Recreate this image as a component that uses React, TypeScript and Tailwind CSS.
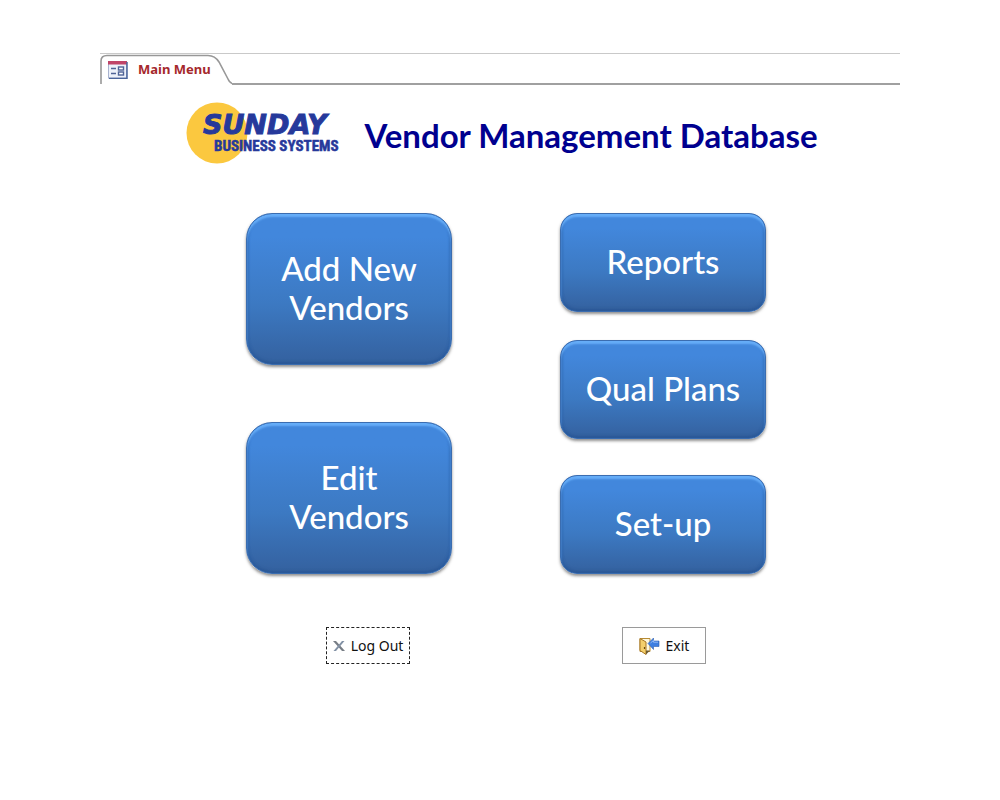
import type { ReactNode } from 'react';

const tileBase =
  "flex w-[206px] items-center justify-center border border-[#3b6db0] bg-linear-to-b from-[#4287dc] from-15% via-[#3c79c2] via-60% to-[#34619f] px-6 pb-0.5 text-center font-['Lato',sans-serif] text-[33px] leading-[39px] font-medium text-white shadow-[0_2px_3px_rgba(70,70,70,0.6),inset_0_3px_2px_#66adf8,inset_2px_0_2px_rgba(40,95,170,0.35),inset_-2px_0_2px_rgba(40,95,170,0.35),inset_0_-2px_3px_rgba(35,80,140,0.5)]";

function LargeTile({ children }: { children: ReactNode }) {
  return (
    <button type="button" className={`${tileBase} h-[152px] rounded-[26px]`}>
      {children}
    </button>
  );
}

function SmallTile({ children }: { children: ReactNode }) {
  return (
    <button type="button" className={`${tileBase} h-[99px] rounded-[17px]`}>
      {children}
    </button>
  );
}

function FormIcon() {
  return (
    <svg width="20" height="18" viewBox="0 0 20 18" aria-hidden="true">
      <rect x="0.5" y="0.5" width="18" height="16.5" fill="#edf1fa" stroke="#a9b3cf" />
      <rect x="0" y="0" width="19" height="3.5" fill="#c04468" />
      <path d="M19 1v16.5H1" fill="none" stroke="#4b659c" strokeWidth="1.5" />
      <path d="M3 7.5h5M3 12.5h5" stroke="#4f6396" strokeWidth="1.4" />
      <rect x="10.5" y="6" width="5" height="3" fill="#fff" stroke="#4f6396" strokeWidth="1.4" />
      <rect x="10.5" y="11" width="5" height="3" fill="#fff" stroke="#4f6396" strokeWidth="1.4" />
    </svg>
  );
}

function Logo() {
  return (
    <svg width="154" height="64" viewBox="0 0 154 64" role="img" aria-label="Sunday Business Systems">
      <circle cx="31" cy="32" r="30.5" fill="#fbc83f" />
      <text x="17" y="33" fill="#26399b" stroke="#26399b" strokeWidth="1" fontFamily="DejaVu Sans, sans-serif" fontSize="27" fontWeight="700" fontStyle="italic">
        SUNDAY
      </text>
      <text x="28" y="50" fill="#26399b" stroke="#26399b" strokeWidth="0.5" fontFamily="Roboto Condensed, Roboto, sans-serif" fontSize="15" fontWeight="700">
        BUSINESS SYSTEMS
      </text>
    </svg>
  );
}

function ExitIcon() {
  return (
    <svg width="21" height="20" viewBox="0 0 21 20" aria-hidden="true">
      <path d="M1 2.5h10v13H1z" fill="#fff8dc" stroke="#b78b35" />
      <path d="M1 2.5l6 3.5v12.5l-6-4z" fill="#f3cf6b" stroke="#a77725" />
      <path d="M7 14.5h4l-4 4z" fill="#6d5a30" />
      <path d="M5.500 11v2" stroke="#6b4b12" strokeWidth="1.2" />
      <path d="M9 7.5L14.5 2v3H20v5.500h-5.500v3z" fill="#3f7fe0" stroke="#2f5fae" strokeWidth="0.6" />
      <path d="M11.5 7l3-2.500v1.700h4.500" fill="none" stroke="#91b9f4" />
    </svg>
  );
}

export default function App() {
  return (
    <div className="min-h-screen bg-white px-[10%] pt-[53px] pb-8">
      <nav className="flex border-t border-[#c9c9c9]">
        <div className="relative h-[31px] w-[132px] shrink-0">
          <svg className="absolute inset-0" width="132" height="31" viewBox="0 0 132 31" aria-hidden="true">
            <path
              d="M1 30V7Q1 1.5 7 1.5H108Q115 1.5 119 8L128 25Q130 29.5 133 29.5"
              fill="#fff"
              stroke="#989898"
              strokeWidth="1.6"
            />
          </svg>
          <a
            href="#main-menu"
            aria-current="page"
            className="relative flex h-full items-center gap-[10px] pl-2 font-['Noto_Sans',sans-serif] text-[13px] font-bold whitespace-nowrap text-[#a5282c]"
          >
            <FormIcon />
            Main Menu
          </a>
        </div>
        <div className="flex-1 border-b-2 border-[#a0a0a0]" />
      </nav>

      <main className="pl-3">
        <header className="flex items-center justify-center gap-6 pt-4 pr-2">
          <Logo />
          <h1 className="pt-1 font-['Lato',sans-serif] text-[33px] leading-10 font-bold whitespace-nowrap text-[#00008f]">
            Vendor Management Database
          </h1>
        </header>

        <div className="mt-[48px] flex justify-center gap-[108px]">
          <div className="flex flex-col justify-between">
            <LargeTile>Add New Vendors</LargeTile>
            <LargeTile>Edit Vendors</LargeTile>
          </div>
          <div className="flex flex-col">
            <SmallTile>Reports</SmallTile>
            <div className="mt-7 mb-9">
              <SmallTile>Qual Plans</SmallTile>
            </div>
            <SmallTile>Set-up</SmallTile>
          </div>
        </div>

        <div className="mt-[53px] flex justify-center gap-[212px] pl-5 font-['Noto_Sans',sans-serif] text-[14px] text-[#111]">
          <button
            type="button"
            className="flex h-[37px] w-[84px] items-center justify-center gap-1.5 border border-dashed border-[#222] whitespace-nowrap"
          >
            <svg width="12" height="12" viewBox="0 0 12 12" aria-hidden="true">
              <path d="M0 1h3l9 10H9z" fill="#777d85" />
              <path d="M11.5 1H9L0.5 11H3z" fill="#8291a5" />
            </svg>
            Log Out
          </button>
          <button
            type="button"
            className="flex h-[37px] w-[84px] items-center justify-center gap-1.5 border border-[#9a9a9a] whitespace-nowrap"
          >
            <ExitIcon />
            Exit
          </button>
        </div>
      </main>
    </div>
  );
}
